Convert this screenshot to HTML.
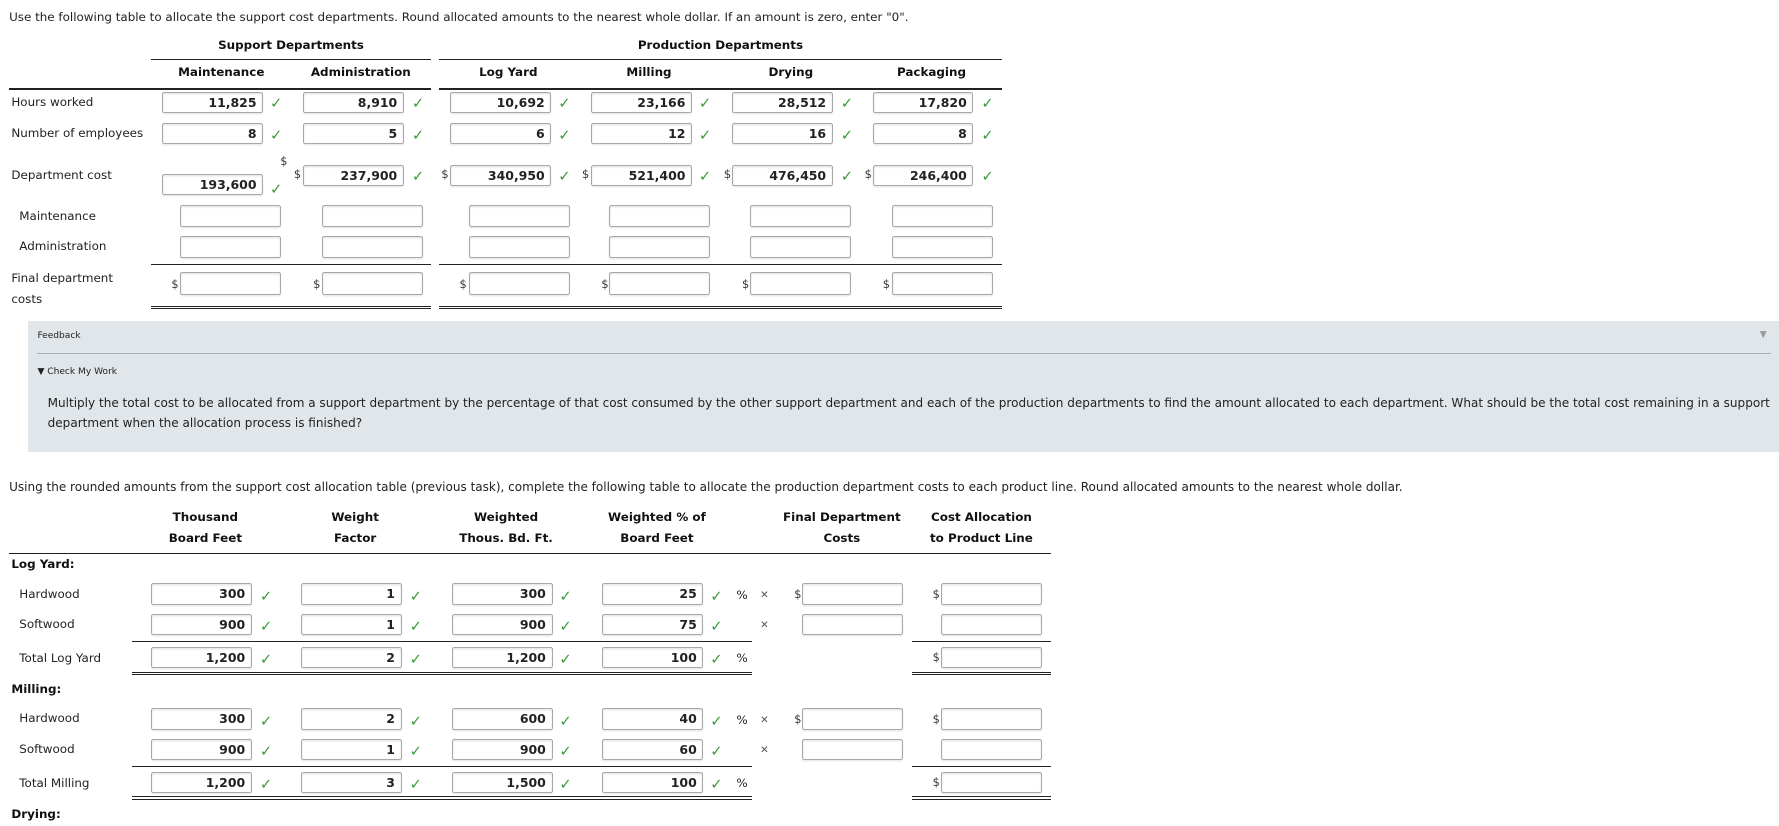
<!DOCTYPE html>
<html><head><meta charset="utf-8"><style>
html,body{margin:0;padding:0;background:#fff;overflow:hidden}
body{width:1568px;height:728px;zoom:1.1346;position:relative;font-family:"DejaVu Sans","Liberation Sans",sans-serif;font-size:10.5px;color:#222}
.t{position:absolute;white-space:nowrap;line-height:14px}
.b{font-weight:bold;color:#111}
.h{position:absolute;font-weight:bold;text-align:center;line-height:18px;color:#111;white-space:nowrap}
.i{position:absolute;box-sizing:border-box;width:89px;height:19px;border:1px solid #a8a8a8;border-radius:2px;box-shadow:inset 0 1px 2px rgba(0,0,0,.12),0 1px 1px rgba(0,0,0,.08);background:#fff;text-align:right;padding-right:5px;font-weight:bold;font-size:11px;line-height:17px;color:#222}
.c{position:absolute;color:#3a9a3a;font-size:13px;font-weight:bold;line-height:14px;margin-top:2px}
.d{position:absolute;font-size:10px;line-height:12px;color:#333}
.l{position:absolute;height:1px;background:#222}
.dl{position:absolute;height:1px;border-top:1px solid #222;border-bottom:1px solid #222;height:1px}
</style></head><body>
<div class="t" style="left:8px;top:9px">Use the following table to allocate the support cost departments. Round allocated amounts to the nearest whole dollar. If an amount is zero, enter "0".</div>
<div class="h" style="left:133px;width:247px;top:31px">Support Departments</div>
<div class="h" style="left:387px;width:496px;top:31px">Production Departments</div>
<div class="l" style="left:133px;width:247px;top:52px"></div>
<div class="l" style="left:387px;width:496px;top:52px"></div>
<div class="h" style="left:145px;width:100px;top:55px">Maintenance</div>
<div class="h" style="left:258px;width:120px;top:55px">Administration</div>
<div class="h" style="left:398px;width:100px;top:55px">Log Yard</div>
<div class="h" style="left:522px;width:100px;top:55px">Milling</div>
<div class="h" style="left:647px;width:100px;top:55px">Drying</div>
<div class="h" style="left:771px;width:100px;top:55px">Packaging</div>
<div class="l" style="left:8px;width:372px;top:78px"></div>
<div class="l" style="left:387px;width:496px;top:78px"></div>

<div class="t" style="left:10px;top:84px">Hours worked</div>
<div class="i" style="left:143px;top:81px">11,825</div><div class="c" style="left:238px;top:83px">✓</div>
<div class="i" style="left:267px;top:81px">8,910</div><div class="c" style="left:363px;top:83px">✓</div>
<div class="i" style="left:397px;top:81px">10,692</div><div class="c" style="left:492px;top:83px">✓</div>
<div class="i" style="left:521px;top:81px">23,166</div><div class="c" style="left:616px;top:83px">✓</div>
<div class="i" style="left:645px;top:81px">28,512</div><div class="c" style="left:741px;top:83px">✓</div>
<div class="i" style="left:769px;top:81px">17,820</div><div class="c" style="left:865px;top:83px">✓</div>

<div class="t" style="left:10px;top:111px">Number of employees</div>
<div class="i" style="left:143px;top:108px">8</div><div class="c" style="left:238px;top:111px">✓</div>
<div class="i" style="left:267px;top:108px">5</div><div class="c" style="left:363px;top:111px">✓</div>
<div class="i" style="left:397px;top:108px">6</div><div class="c" style="left:492px;top:111px">✓</div>
<div class="i" style="left:521px;top:108px">12</div><div class="c" style="left:616px;top:111px">✓</div>
<div class="i" style="left:645px;top:108px">16</div><div class="c" style="left:741px;top:111px">✓</div>
<div class="i" style="left:769px;top:108px">8</div><div class="c" style="left:865px;top:111px">✓</div>

<div class="t" style="left:10px;top:148px">Department cost</div>
<div class="i" style="left:143px;top:153px">193,600</div><div class="c" style="left:238px;top:158px">✓</div>
<div class="d" style="left:247px;top:137px">$</div>
<div class="d" style="left:259px;top:148px">$</div><div class="i" style="left:267px;top:145px">237,900</div><div class="c" style="left:363px;top:147px">✓</div>
<div class="d" style="left:389px;top:148px">$</div><div class="i" style="left:397px;top:145px">340,950</div><div class="c" style="left:492px;top:147px">✓</div>
<div class="d" style="left:513px;top:148px">$</div><div class="i" style="left:521px;top:145px">521,400</div><div class="c" style="left:616px;top:147px">✓</div>
<div class="d" style="left:638px;top:148px">$</div><div class="i" style="left:645px;top:145px">476,450</div><div class="c" style="left:741px;top:147px">✓</div>
<div class="d" style="left:762px;top:148px">$</div><div class="i" style="left:769px;top:145px">246,400</div><div class="c" style="left:865px;top:147px">✓</div>

<div class="t" style="left:17px;top:184px">Maintenance</div>
<div class="i" style="left:159px;top:181px"></div><div class="i" style="left:284px;top:181px"></div><div class="i" style="left:413px;top:181px"></div><div class="i" style="left:537px;top:181px"></div><div class="i" style="left:661px;top:181px"></div><div class="i" style="left:786px;top:181px"></div>
<div class="t" style="left:17px;top:211px">Administration</div>
<div class="i" style="left:159px;top:208px"></div><div class="i" style="left:284px;top:208px"></div><div class="i" style="left:413px;top:208px"></div><div class="i" style="left:537px;top:208px"></div><div class="i" style="left:661px;top:208px"></div><div class="i" style="left:786px;top:208px"></div>
<div class="l" style="left:133px;width:247px;top:233px"></div>
<div class="l" style="left:387px;width:496px;top:233px"></div>
<div class="t" style="left:10px;top:236px;line-height:19px">Final department<br>costs</div>
<div class="d" style="left:151px;top:245px">$</div><div class="i" style="left:159px;top:240px;height:20px"></div>
<div class="d" style="left:276px;top:245px">$</div><div class="i" style="left:284px;top:240px;height:20px"></div>
<div class="d" style="left:405px;top:245px">$</div><div class="i" style="left:413px;top:240px;height:20px"></div>
<div class="d" style="left:530px;top:245px">$</div><div class="i" style="left:537px;top:240px;height:20px"></div>
<div class="d" style="left:654px;top:245px">$</div><div class="i" style="left:661px;top:240px;height:20px"></div>
<div class="d" style="left:778px;top:245px">$</div><div class="i" style="left:786px;top:240px;height:20px"></div>
<div class="dl" style="left:133px;width:247px;top:270px"></div>
<div class="dl" style="left:387px;width:496px;top:270px"></div>

<div style="position:absolute;left:25px;top:283px;width:1543px;height:115px;background:#e0e6ea"></div>
<div class="t" style="left:33px;top:290px;font-size:8px">Feedback</div>
<div class="t" style="left:1551px;top:289px;font-size:8px;color:#999">▼</div>
<div style="position:absolute;left:33px;top:311px;width:1528px;height:1px;background:#a8b0b6"></div>
<div class="t" style="left:33px;top:322px;font-size:8px">▼ Check My Work</div>
<div class="t" style="left:42px;top:346px;line-height:18px;font-size:10.62px">Multiply the total cost to be allocated from a support department by the percentage of that cost consumed by the other support department and each of the production departments to find the amount allocated to each department. What should be the total cost remaining in a support<br>department when the allocation process is finished?</div>

<div class="t" style="left:8px;top:423px;font-size:10.6px">Using the rounded amounts from the support cost allocation table (previous task), complete the following table to allocate the production department costs to each product line. Round allocated amounts to the nearest whole dollar.</div>
<div class="h" style="left:121px;width:120px;top:447px">Thousand<br>Board Feet</div>
<div class="h" style="left:253px;width:120px;top:447px">Weight<br>Factor</div>
<div class="h" style="left:386px;width:120px;top:447px">Weighted<br>Thous. Bd. Ft.</div>
<div class="h" style="left:514px;width:130px;top:447px">Weighted % of<br>Board Feet</div>
<div class="h" style="left:677px;width:130px;top:447px">Final Department<br>Costs</div>
<div class="h" style="left:800px;width:130px;top:447px">Cost Allocation<br>to Product Line</div>
<div class="l" style="left:8px;width:918px;top:487px"></div>

<div class="t b" style="left:10px;top:491px">Log Yard:</div>
<div class="t" style="left:17px;top:517px">Hardwood</div>
<div class="i" style="left:133px;top:514px">300</div><div class="c" style="left:229px;top:517px">✓</div>
<div class="i" style="left:265px;top:514px">1</div><div class="c" style="left:361px;top:517px">✓</div>
<div class="i" style="left:398px;top:514px">300</div><div class="c" style="left:493px;top:517px">✓</div>
<div class="i" style="left:531px;top:514px">25</div><div class="c" style="left:626px;top:517px">✓</div>
<div class="t" style="left:649px;top:518px">%</div><div class="t" style="left:670px;top:518px;font-size:9px;color:#555">✕</div>
<div class="d" style="left:700px;top:518px">$</div><div class="i" style="left:707px;top:514px"></div>
<div class="d" style="left:822px;top:518px">$</div><div class="i" style="left:829px;top:514px"></div>
<div class="t" style="left:17px;top:544px">Softwood</div>
<div class="i" style="left:133px;top:541px">900</div><div class="c" style="left:229px;top:544px">✓</div>
<div class="i" style="left:265px;top:541px">1</div><div class="c" style="left:361px;top:544px">✓</div>
<div class="i" style="left:398px;top:541px">900</div><div class="c" style="left:493px;top:544px">✓</div>
<div class="i" style="left:531px;top:541px">75</div><div class="c" style="left:626px;top:544px">✓</div>
<div class="t" style="left:670px;top:545px;font-size:9px;color:#555">✕</div>
<div class="i" style="left:707px;top:541px"></div><div class="i" style="left:829px;top:541px"></div>
<div class="l" style="left:116px;width:547px;top:565px"></div>
<div class="l" style="left:804px;width:122px;top:565px"></div>
<div class="t" style="left:17px;top:574px">Total Log Yard</div>
<div class="i" style="left:133px;top:570px">1,200</div><div class="c" style="left:229px;top:573px">✓</div>
<div class="i" style="left:265px;top:570px">2</div><div class="c" style="left:361px;top:573px">✓</div>
<div class="i" style="left:398px;top:570px">1,200</div><div class="c" style="left:493px;top:573px">✓</div>
<div class="i" style="left:531px;top:570px">100</div><div class="c" style="left:626px;top:573px">✓</div>
<div class="t" style="left:649px;top:574px">%</div>
<div class="d" style="left:822px;top:574px">$</div><div class="i" style="left:829px;top:570px"></div>
<div class="dl" style="left:116px;width:547px;top:592px"></div>
<div class="dl" style="left:804px;width:122px;top:592px"></div>

<div class="t b" style="left:10px;top:601px">Milling:</div>
<div class="t" style="left:17px;top:627px">Hardwood</div>
<div class="i" style="left:133px;top:624px">300</div><div class="c" style="left:229px;top:627px">✓</div>
<div class="i" style="left:265px;top:624px">2</div><div class="c" style="left:361px;top:627px">✓</div>
<div class="i" style="left:398px;top:624px">600</div><div class="c" style="left:493px;top:627px">✓</div>
<div class="i" style="left:531px;top:624px">40</div><div class="c" style="left:626px;top:627px">✓</div>
<div class="t" style="left:649px;top:628px">%</div><div class="t" style="left:670px;top:628px;font-size:9px;color:#555">✕</div>
<div class="d" style="left:700px;top:628px">$</div><div class="i" style="left:707px;top:624px"></div>
<div class="d" style="left:822px;top:628px">$</div><div class="i" style="left:829px;top:624px"></div>
<div class="t" style="left:17px;top:654px">Softwood</div>
<div class="i" style="left:133px;top:651px">900</div><div class="c" style="left:229px;top:654px">✓</div>
<div class="i" style="left:265px;top:651px">1</div><div class="c" style="left:361px;top:654px">✓</div>
<div class="i" style="left:398px;top:651px">900</div><div class="c" style="left:493px;top:654px">✓</div>
<div class="i" style="left:531px;top:651px">60</div><div class="c" style="left:626px;top:654px">✓</div>
<div class="t" style="left:670px;top:655px;font-size:9px;color:#555">✕</div>
<div class="i" style="left:707px;top:651px"></div><div class="i" style="left:829px;top:651px"></div>
<div class="l" style="left:116px;width:547px;top:675px"></div>
<div class="l" style="left:804px;width:122px;top:675px"></div>
<div class="t" style="left:17px;top:684px">Total Milling</div>
<div class="i" style="left:133px;top:680px">1,200</div><div class="c" style="left:229px;top:683px">✓</div>
<div class="i" style="left:265px;top:680px">3</div><div class="c" style="left:361px;top:683px">✓</div>
<div class="i" style="left:398px;top:680px">1,500</div><div class="c" style="left:493px;top:683px">✓</div>
<div class="i" style="left:531px;top:680px">100</div><div class="c" style="left:626px;top:683px">✓</div>
<div class="t" style="left:649px;top:684px">%</div>
<div class="d" style="left:822px;top:684px">$</div><div class="i" style="left:829px;top:680px"></div>
<div class="dl" style="left:116px;width:547px;top:702px"></div>
<div class="dl" style="left:804px;width:122px;top:702px"></div>
<div class="t b" style="left:10px;top:711px">Drying:</div>
</body></html>
